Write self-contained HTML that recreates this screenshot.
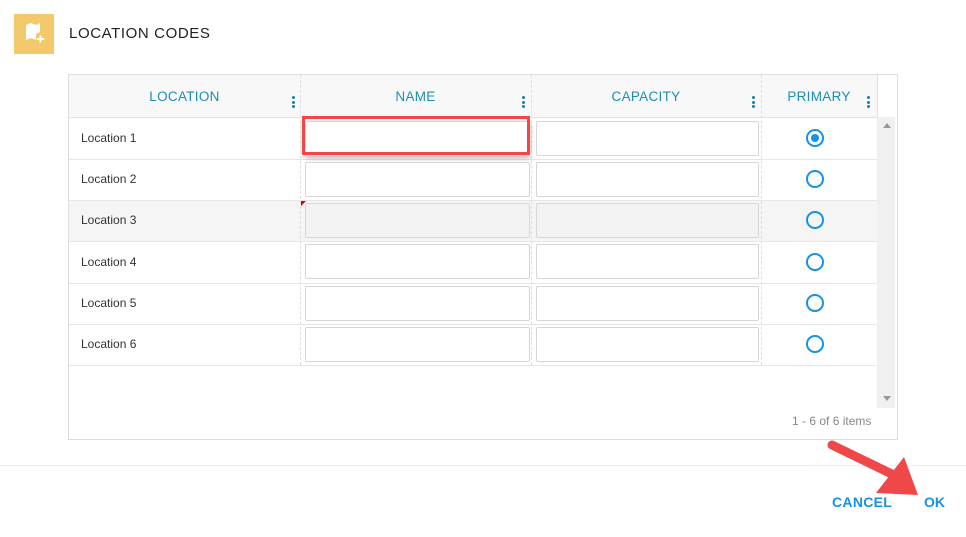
<!DOCTYPE html>
<html><head><style>
body{margin:0;width:966px;height:537px;background:#fff;font-family:"Liberation Sans",sans-serif;position:relative;overflow:hidden}
.a{position:absolute}
.hd{color:#1a8fb0;font-size:13.5px;text-align:center;letter-spacing:.3px}
.cell{font-size:12px;color:#333}
.inp{position:absolute;border:1px solid #d6d6d6;border-radius:2px;background:#fff;height:33px}
.dots{position:absolute;width:3px}
.dots i{display:block;width:3px;height:3px;border-radius:50%;background:#1a7fa8;margin-bottom:1.5px}
.rad{position:absolute;width:14px;height:14px;border:2px solid #1592e6;border-radius:50%}
</style></head><body>
<div class="a" style="left:14px;top:14px;width:40px;height:40px;background:#f3c96b"></div>
<svg class="a" style="left:24px;top:22px" width="22" height="24" viewBox="0 0 22 24"><path d="M2 3 L7 1 L12 3 L16 1 L16 10 L12 12 L12 18 L7 16 L2 18 Z" fill="#fff"/><path d="M13 17h7M16.5 13.5v7" stroke="#fff" stroke-width="2"/></svg>
<div class="a" style="left:69px;top:25px;font-size:15px;letter-spacing:.6px;color:#222">LOCATION CODES</div>
<div class="a" style="left:68px;top:74px;width:828px;height:364px;border:1px solid #ddd"></div>
<div class="a" style="left:69px;top:75px;width:808px;height:42px;background:#f8f8f8;border-bottom:1px solid #e2e2e2"></div>
<div class="a" style="left:877px;top:75px;width:18px;height:42px;border-left:1px solid #ddd"></div>
<div class="a" style="left:877px;top:117px;width:18px;height:291px;background:#f0f0f0"></div>
<div class="a" style="left:883px;top:123px;border:4px solid transparent;border-bottom:5px solid #999;border-top:0"></div>
<div class="a" style="left:883px;top:396px;border:4px solid transparent;border-top:5px solid #999;border-bottom:0"></div>
<div class="a" style="left:69px;top:200px;width:808px;height:41px;background:#f5f5f5"></div>
<div class="a" style="left:300px;top:75px;height:290px;border-left:1px dashed #ddd"></div>
<div class="a" style="left:531px;top:75px;height:290px;border-left:1px dashed #ddd"></div>
<div class="a" style="left:761px;top:75px;height:290px;border-left:1px dashed #ddd"></div>
<div class="a hd" style="left:69px;top:89px;width:231px">LOCATION</div>
<div class="a hd" style="left:300px;top:89px;width:231px">NAME</div>
<div class="a hd" style="left:531px;top:89px;width:230px">CAPACITY</div>
<div class="a hd" style="left:761px;top:89px;width:116px">PRIMARY</div>
<div class="dots" style="left:292px;top:96px"><i></i><i></i><i></i></div>
<div class="dots" style="left:522px;top:96px"><i></i><i></i><i></i></div>
<div class="dots" style="left:752px;top:96px"><i></i><i></i><i></i></div>
<div class="dots" style="left:867px;top:96px"><i></i><i></i><i></i></div>

<div class="a" style="left:69px;top:159px;width:808px;border-top:1px solid #e6e6e6"></div>
<div class="a" style="left:69px;top:200px;width:808px;border-top:1px solid #e6e6e6"></div>
<div class="a" style="left:69px;top:241px;width:808px;border-top:1px solid #e6e6e6"></div>
<div class="a" style="left:69px;top:283px;width:808px;border-top:1px solid #e6e6e6"></div>
<div class="a" style="left:69px;top:324px;width:808px;border-top:1px solid #e6e6e6"></div>
<div class="a" style="left:69px;top:365px;width:808px;border-top:1px solid #e6e6e6"></div>

<div class="a cell" style="left:81px;top:131px">Location 1</div>
<div class="a cell" style="left:81px;top:172px">Location 2</div>
<div class="a cell" style="left:81px;top:213px">Location 3</div>
<div class="a cell" style="left:81px;top:255px">Location 4</div>
<div class="a cell" style="left:81px;top:296px">Location 5</div>
<div class="a cell" style="left:81px;top:337px">Location 6</div>

<div class="inp" style="left:305px;top:121px;width:223px;box-shadow:0 2px 6px rgba(0,0,0,.3)"></div>
<div class="inp" style="left:305px;top:162px;width:223px"></div>
<div class="inp" style="left:305px;top:203px;width:223px;background:#f3f3f3"></div>
<div class="inp" style="left:305px;top:244px;width:223px"></div>
<div class="inp" style="left:305px;top:286px;width:223px"></div>
<div class="inp" style="left:305px;top:327px;width:223px"></div>
<div class="inp" style="left:536px;top:121px;width:221px"></div>
<div class="inp" style="left:536px;top:162px;width:221px"></div>
<div class="inp" style="left:536px;top:203px;width:221px;background:#f3f3f3"></div>
<div class="inp" style="left:536px;top:244px;width:221px"></div>
<div class="inp" style="left:536px;top:286px;width:221px"></div>
<div class="inp" style="left:536px;top:327px;width:221px"></div>
<div class="a" style="left:302px;top:116px;width:222px;height:33px;border:3px solid #f04848"></div>
<div class="a" style="left:301px;top:201px;border-top:5px solid #d00;border-right:5px solid transparent"></div>

<div class="rad" style="left:806px;top:129px"><div style="margin:3px;width:8px;height:8px;border-radius:50%;background:#1592e6"></div></div>
<div class="rad" style="left:806px;top:170px"></div>
<div class="rad" style="left:806px;top:211px"></div>
<div class="rad" style="left:806px;top:253px"></div>
<div class="rad" style="left:806px;top:294px"></div>
<div class="rad" style="left:806px;top:335px"></div>

<div class="a" style="left:792px;top:414px;font-size:12px;color:#888">1 - 6 of 6 items</div>
<div class="a" style="left:0;top:465px;width:966px;border-top:1px solid #eee"></div>
<div class="a" style="left:832px;top:494px;font-size:14px;font-weight:bold;color:#1592e6;letter-spacing:.3px">CANCEL</div>
<div class="a" style="left:924px;top:494px;font-size:14px;font-weight:bold;color:#1592e6">OK</div>
<svg class="a" style="left:820px;top:435px" width="110" height="65"><line x1="12" y1="10" x2="76" y2="41" stroke="#f04848" stroke-width="9" stroke-linecap="round"/><polygon points="56,58 98,60 84,22" fill="#f04848"/></svg>
</body></html>
